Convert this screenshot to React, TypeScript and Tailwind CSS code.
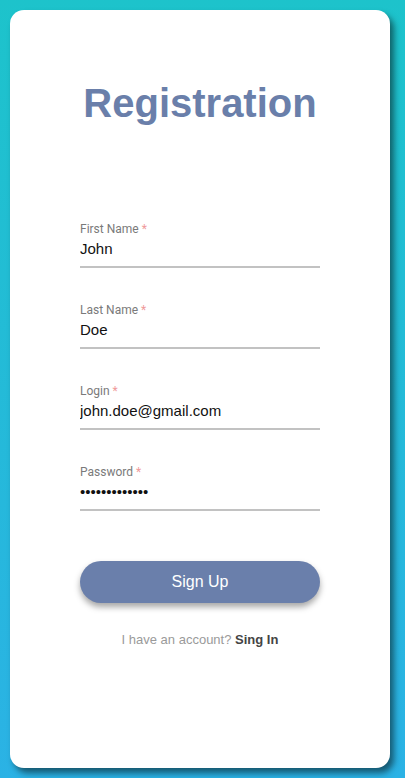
import React from "react";

const fields = [
  { label: "First Name", value: "John", type: "text" },
  { label: "Last Name", value: "Doe", type: "text" },
  { label: "Login", value: "john.doe@gmail.com", type: "text" },
  { label: "Password", value: "johndoe123456", type: "password" },
];

export default function App() {
  return (
    <div className="min-h-screen bg-[linear-gradient(to_bottom,#1dc3cb,#2bb2e5)] p-[10px] font-['Liberation_Sans',Arial,sans-serif]">
      <div className="h-[758px] w-[380px] rounded-[14px] bg-white shadow-[4px_5px_6px_rgba(0,0,0,0.5)] flex flex-col items-center pt-[69px]">
        <h1 className="text-[40px] leading-[48px] font-bold text-[#6a7faa]">Registration</h1>

        {/* form fields */}
        <form className="w-[240px] mt-[95px] flex flex-col gap-[35px]">
          {fields.map((f) => (
            <label key={f.label} className="flex flex-col border-b-2 border-[#c2c2c2] pb-[8px]">
              <span className="font-['Roboto',sans-serif] text-[12px] leading-[14px] text-[#7a7a7a]">
                {f.label} <span className="text-[#ef9a9a]">*</span>
              </span>
              <input
                type={f.type}
                defaultValue={f.value}
                readOnly
                className="mt-[4px] h-[18px] w-full bg-transparent p-0 text-[15px] leading-[18px] text-[#111] outline-none"
              />
            </label>
          ))}
        </form>

        <button className="mt-[50px] h-[42px] w-[240px] rounded-full bg-[#6a7fab] text-[16px] text-white shadow-[0_4px_6px_rgba(0,0,0,0.35)]">
          Sign Up
        </button>

        <p className="mt-[29px] text-[13px] leading-[16px] text-[#9a9a9a]">
          I have an account? <span className="font-bold text-[#444]">Sing In</span>
        </p>
      </div>
    </div>
  );
}
